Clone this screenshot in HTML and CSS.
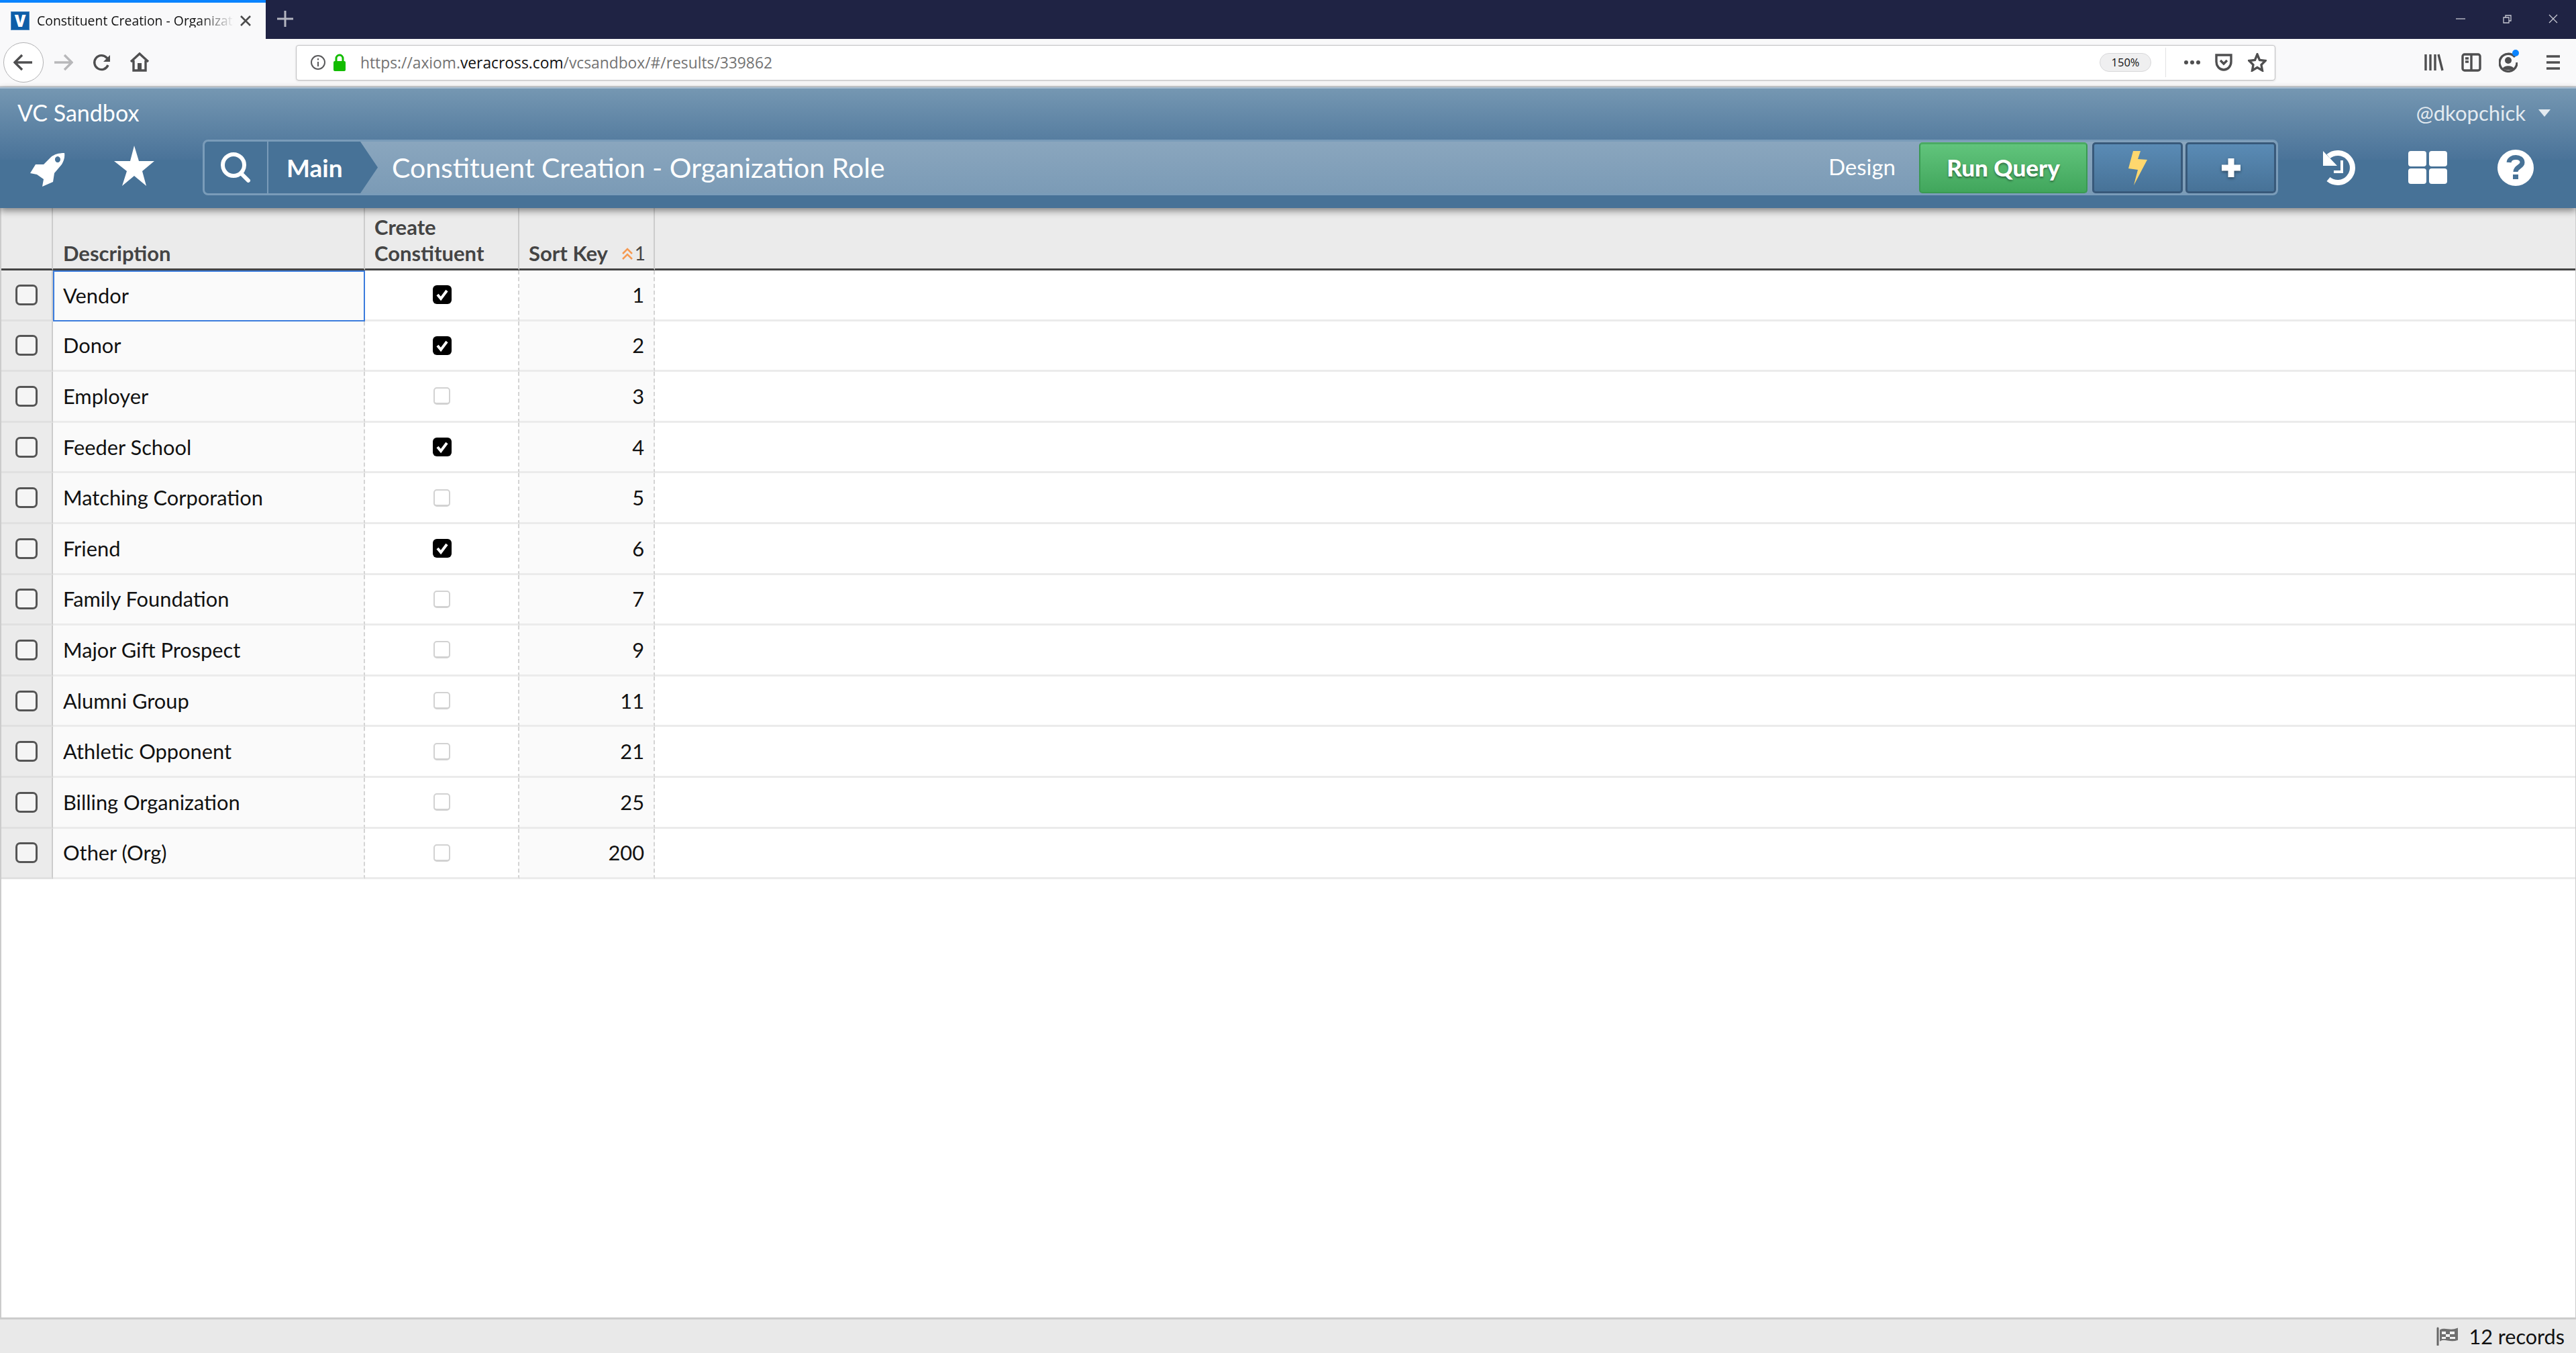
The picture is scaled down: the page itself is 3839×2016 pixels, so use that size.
FILE: index.html
```html
<!DOCTYPE html>
<html lang="en">
<head>
<meta charset="utf-8">
<title>Constituent Creation - Organization Role</title>
<link rel="stylesheet" href="styles.css">
</head>
<body>
<div class="tabstrip">
  <div class="tab">
    <span class="favicon">V</span>
    <span class="tab-title">Constituent Creation - Organization Role</span>
    <svg class="tab-close" viewBox="0 0 18 18"><path d="M2 2L16 16M16 2L2 16"/></svg>
  </div>
  <svg class="newtab" viewBox="0 0 24 24"><path d="M12 0V24M0 12H24"/></svg>
  <div class="winctrls">
    <svg class="winbtn" viewBox="0 0 16 16"><path d="M1 8H15"/></svg>
    <svg class="winbtn" viewBox="0 0 16 16"><path d="M3 6H11V14H3ZM6 6V3H14V11H11"/></svg>
    <svg class="winbtn" viewBox="0 0 16 16"><path d="M2 2L14 14M14 2L2 14"/></svg>
  </div>
</div>
<div class="toolbar">
  <div class="navbtns">
    <span class="backbtn"><svg class="tbicon" viewBox="0 0 30 26"><path d="M28 13H3M13 2L2 13L13 24"/></svg></span>
    <svg class="tbicon forward" viewBox="0 0 30 26"><path d="M2 13H27M17 2L28 13L17 24"/></svg>
    <svg class="tbicon reload" viewBox="0 0 28 28"><path d="M23 18A10.5 10.5 0 1 1 21 7L25 11"/><path class="fillp" d="M26 3V13H16Z"/></svg>
    <svg class="tbicon home" viewBox="0 0 30 30"><path d="M2 14L15 2L28 14M6 12V27H24V12"/><path class="fillp" d="M12 27V16H18V27Z"/></svg>
  </div>
  <div class="urlbar">
    <svg class="urlicon" viewBox="0 0 24 24"><circle cx="12" cy="12" r="10"/><path d="M12 11V18M12 6V8.5"/></svg>
    <svg class="lock" viewBox="0 0 20 26"><path class="lockarc" d="M5 12V7A5 5 0 0 1 15 7V12"/><rect x="1" y="11" width="18" height="15" rx="2"/></svg>
    <span class="url">https://axiom.<b class="urlhost">veracross.com</b>/vcsandbox/#/results/339862</span>
    <span class="zoombadge">150%</span>
    <span class="urlsep"></span>
    <span class="dots"><i></i><i></i><i></i></span>
    <svg class="tbicon pocket" viewBox="0 0 28 28"><path d="M3 3H25V13A11 12 0 0 1 3 13Z"/><path d="M9 11L14 16L19 11"/></svg>
    <svg class="tbicon ustar" viewBox="0 0 28 28"><path d="M14 2L17.5 10.5L26 11.5L20 17.5L21.5 26L14 21.5L6.500 26L8 17.500L2 11.500L10.500 10.500Z"/></svg>
  </div>
  <div class="toolright">
    <svg class="tbicon lib" viewBox="0 0 30 28"><path d="M3 2V26M10 2V26M17 2V26M22 2L28 26"/></svg>
    <svg class="tbicon side" viewBox="0 0 30 28"><rect x="2" y="2" width="26" height="24" rx="3"/><path d="M15 2V26M6 8H11M6 13H11"/></svg>
    <span class="acct">
      <svg class="tbicon acctsvg" viewBox="0 0 28 30"><path d="M24 7A13 13 0 1 0 27 15"/><circle class="fillp" cx="14" cy="12" r="5"/><path class="fillp" d="M6 24C7 19 21 19 22 24C19 27 9 27 6 24Z"/></svg>
      <i class="acctdot"></i>
    </span>
    <span class="toolsep"></span>
    <svg class="tbicon menu" viewBox="0 0 24 24"><path d="M2 3H22M2 12H22M2 21H22"/></svg>
  </div>
</div>
<header class="apphead">
  <div class="headtop">
    <span class="school">VC Sandbox</span>
    <span class="user">@dkopchick<i class="caret"></i></span>
  </div>
  <div class="headnav">
    <svg class="rocket" viewBox="0 0 52 50"><path fill-rule="evenodd" d="M51 0C42 0 36 2 31 6L20 17H8L0 30L10 32L20 39L18 50L34 43L36 30L47 17C50 12 52 6 51 0ZM41 5A4 4.500 0 1 1 40.900 5Z"/></svg>
    <svg class="star" viewBox="0 0 60 60"><path d="M30 0L37 23H60L42 38L48 60L30 45L12 60L19 38L0 23H24Z"/></svg>
    <div class="crumbs">
      <span class="crumb-search"><svg viewBox="0 0 45 45"><circle cx="19" cy="19" r="16"/><path d="M30 31L41 42"/></svg></span>
      <span class="crumb-main">Main</span>
      <span class="crumb-title">Constituent Creation - Organization Role</span>
      <span class="design">Design</span>
      <button class="btn run">Run Query</button>
      <button class="btn tool bolt-btn"><svg viewBox="0 0 28 51"><path d="M7 0H18L14 12L28 13L8 51L14 28L0 26Z"/></svg></button>
      <button class="btn tool plus-btn"><svg viewBox="0 0 34 34"><path d="M17 3V31M3 17H31"/></svg></button>
    </div>
    <svg class="history" viewBox="0 0 54 54"><path class="harc" d="M9 9A22 22 0 1 1 9 43"/><path class="hfill" d="M1 1L1 23L22 23Z"/><path class="hhand" d="M29 15V32H17"/></svg>
    <svg class="apps" viewBox="0 0 58 49"><rect width="27" height="23" rx="4"/><rect x="31" width="27" height="23" rx="4"/><rect y="26" width="27" height="23" rx="4"/><rect x="31" y="26" width="27" height="23" rx="4"/></svg>
    <svg class="help" viewBox="0 0 54 54"><circle cx="27" cy="27" r="27"/><path class="qmark" d="M17 19C18 9 37 9 37 19C37 26 27 25 27 33"/><rect class="qdot" x="23" y="37" width="8" height="7"/></svg>
  </div>
</header>
<main class="grid">
  <div class="row headrow">
    <div class="c c-sel"></div>
    <div class="c c-desc">Description</div>
    <div class="c c-create">Create<br>Constituent</div>
    <div class="c c-sort">Sort Key<span class="sortmark"><svg viewBox="0 0 18 20"><path d="M2 10L9 3L16 10M2 18L9 11L16 18"/></svg>1</span></div>
    <div class="c c-rest"></div>
  </div>
  <div class="row"><div class="c c-sel"><i class="sel"></i></div><div class="c c-desc focus">Vendor</div><div class="c c-create"><svg class="chk on" viewBox="0 0 28 28"><rect width="28" height="28" rx="6"/><path d="M7 14L12 20L21 8"/></svg></div><div class="c c-sort">1</div><div class="c c-rest"></div></div>
  <div class="row"><div class="c c-sel"><i class="sel"></i></div><div class="c c-desc">Donor</div><div class="c c-create"><svg class="chk on" viewBox="0 0 28 28"><rect width="28" height="28" rx="6"/><path d="M7 14L12 20L21 8"/></svg></div><div class="c c-sort">2</div><div class="c c-rest"></div></div>
  <div class="row"><div class="c c-sel"><i class="sel"></i></div><div class="c c-desc">Employer</div><div class="c c-create"><i class="off"></i></div><div class="c c-sort">3</div><div class="c c-rest"></div></div>
  <div class="row"><div class="c c-sel"><i class="sel"></i></div><div class="c c-desc">Feeder School</div><div class="c c-create"><svg class="chk on" viewBox="0 0 28 28"><rect width="28" height="28" rx="6"/><path d="M7 14L12 20L21 8"/></svg></div><div class="c c-sort">4</div><div class="c c-rest"></div></div>
  <div class="row"><div class="c c-sel"><i class="sel"></i></div><div class="c c-desc">Matching Corporation</div><div class="c c-create"><i class="off"></i></div><div class="c c-sort">5</div><div class="c c-rest"></div></div>
  <div class="row"><div class="c c-sel"><i class="sel"></i></div><div class="c c-desc">Friend</div><div class="c c-create"><svg class="chk on" viewBox="0 0 28 28"><rect width="28" height="28" rx="6"/><path d="M7 14L12 20L21 8"/></svg></div><div class="c c-sort">6</div><div class="c c-rest"></div></div>
  <div class="row"><div class="c c-sel"><i class="sel"></i></div><div class="c c-desc">Family Foundation</div><div class="c c-create"><i class="off"></i></div><div class="c c-sort">7</div><div class="c c-rest"></div></div>
  <div class="row"><div class="c c-sel"><i class="sel"></i></div><div class="c c-desc">Major Gift Prospect</div><div class="c c-create"><i class="off"></i></div><div class="c c-sort">9</div><div class="c c-rest"></div></div>
  <div class="row"><div class="c c-sel"><i class="sel"></i></div><div class="c c-desc">Alumni Group</div><div class="c c-create"><i class="off"></i></div><div class="c c-sort">11</div><div class="c c-rest"></div></div>
  <div class="row"><div class="c c-sel"><i class="sel"></i></div><div class="c c-desc">Athletic Opponent</div><div class="c c-create"><i class="off"></i></div><div class="c c-sort">21</div><div class="c c-rest"></div></div>
  <div class="row"><div class="c c-sel"><i class="sel"></i></div><div class="c c-desc">Billing Organization</div><div class="c c-create"><i class="off"></i></div><div class="c c-sort">25</div><div class="c c-rest"></div></div>
  <div class="row"><div class="c c-sel"><i class="sel"></i></div><div class="c c-desc">Other (Org)</div><div class="c c-create"><i class="off"></i></div><div class="c c-sort">200</div><div class="c c-rest"></div></div>
</main>
<footer class="statusbar">
  <svg class="flag" viewBox="0 0 32 28"><path class="pole" d="M2 2V27"/><path class="cloth" d="M6 5C13 1 20 8 31 3V19C20 23 13 16 6 20Z"/><path class="check" d="M8 7H14V11H8ZM14 11H20V15H14ZM20 7H27V11H20ZM8 15H14V18H8ZM20 15H28V18H20Z"/></svg>
  <span>12 records</span>
</footer>
</body>
</html>
```

FILE: styles.css
```css
* { box-sizing: border-box; }
html, body { margin: 0; height: 100%; }
body {
  display: flex;
  flex-direction: column;
  height: 2016px;
  overflow: hidden;
  background: #fff;
  font-family: "Lato", "Liberation Sans", sans-serif;
  color: #111;
}

/* browser tab strip */
.tabstrip {
  flex: 0 0 58px;
  display: flex;
  background: #1f2344;
  position: relative;
}
.tab {
  width: 396px;
  height: 58px;
  background: #f9f9fa;
  border-top: 4px solid #0a84ff;
  display: flex;
  align-items: center;
  padding: 0 21px 0 16px;
}
.favicon {
  flex: 0 0 28px;
  height: 28px;
  background: #0d5ea8;
  border: 1px solid #4a87c0;
  color: #fff;
  font: 800 24px/26px "Open Sans", sans-serif;
  text-align: center;
}
.tab-title {
  flex: 1;
  margin: 0 8px 0 11px;
  overflow: hidden;
  white-space: nowrap;
  font: 19.4px/1 "Open Sans", sans-serif;
  color: #111;
  -webkit-mask-image: linear-gradient(90deg, #000 82%, transparent 100%);
  mask-image: linear-gradient(90deg, #000 82%, transparent 100%);
}
.tab-close { width: 18px; height: 18px; fill: none; stroke: #4c4c4c; stroke-width: 2.6; }
.newtab { width: 24px; height: 24px; margin: 16px 0 0 17px; fill: none; stroke: #b4b5c0; stroke-width: 3; }
.winctrls { margin-left: auto; display: flex; gap: 53px; padding: 20px 26px 0 0; }
.winbtn { width: 16px; height: 16px; fill: none; stroke: #c8c9d2; stroke-width: 1.3; }

/* browser toolbar */
.toolbar {
  flex: 0 0 72px;
  display: flex;
  align-items: center;
  background: #f9f9fa;
  border-bottom: 2px solid #ccd0d4;
  padding-left: 5px;
}
.navbtns { display: flex; align-items: center; width: 436px; }
.backbtn {
  width: 60px;
  height: 60px;
  border: 1px solid #b1b1b3;
  border-radius: 50%;
  background: #fff;
  display: flex;
  align-items: center;
  justify-content: center;
}
.tbicon { fill: none; stroke: #4f4f50; stroke-width: 3.4; flex: none; }
.tbicon .fillp { fill: #4f4f50; stroke: none; }
.backbtn .tbicon { width: 30px; height: 26px; }
.forward { width: 30px; height: 26px; margin-left: 14px; stroke: #b8b8ba; }
.reload { width: 28px; height: 28px; margin-left: 29px; }
.home { width: 30px; height: 30px; margin-left: 27px; }
.urlbar {
  width: 950px;
  flex: 1 1 auto;
  height: 53px;
  background: #fff;
  border: 1px solid #c0c0c2;
  border-radius: 4px;
  display: flex;
  align-items: center;
  padding-left: 20px;
  box-shadow: 0 1px 3px rgba(0, 0, 0, .12);
}
.urlicon { width: 24px; height: 24px; fill: none; stroke: #5a5a5c; stroke-width: 2; }
.lock { width: 20px; height: 26px; margin-left: 10px; fill: #12bc00; }
.lockarc { fill: none; stroke: #12bc00; stroke-width: 3; }
.url { margin: 2px 0 0 21px; font: 22.8px/1 "Open Sans", sans-serif; color: #737373; white-space: nowrap; }
.urlhost { font-weight: 400; color: #111; }
.zoombadge {
  margin-left: auto;
  width: 77px;
  height: 28px;
  border-radius: 14px;
  background: #efeff0;
  border: 1px solid #d8d8da;
  font: 16.5px/26px "Open Sans", sans-serif;
  color: #111;
  text-align: center;
}
.urlsep { width: 1px; height: 44px; margin-left: 21px; background: #e2e2e4; }
.dots { display: flex; gap: 3px; margin-left: 27px; }
.dots i { width: 6px; height: 6px; border-radius: 50%; background: #4f4f50; }
.pocket { width: 28px; height: 28px; margin-left: 21px; }
.ustar { width: 28px; height: 28px; margin: 0 12px 0 22px; }
.toolright { display: flex; align-items: center; margin-left: 221px; width: 227px; height: 60px; padding-right: 22px; }
.lib { width: 30px; height: 28px; }
.side { width: 30px; height: 28px; margin-left: 26px; }
.acct { position: relative; display: flex; margin-left: 26px; }
.acctsvg { width: 28px; height: 30px; }
.acctdot { position: absolute; right: -2px; top: -4px; width: 10px; height: 10px; border-radius: 50%; background: #0a84ff; }
.toolsep { width: 1px; height: 60px; margin-left: 20px; background: #e2e2e4; }
.menu { width: 24px; height: 24px; margin-left: 21px; stroke-width: 3.6; }

/* app header */
.apphead {
  flex: 0 0 180px;
  background: linear-gradient(#7597b2 0, #4a7399 106px, #477297 106px);
  border-top: 2px solid #a3bbd0;
  box-shadow: 0 4px 10px rgba(0, 0, 0, .45);
  position: relative;
  z-index: 2;
  color: #fff;
}
.headtop { height: 76px; display: flex; justify-content: space-between; padding: 16px 38px 0 26px; font-size: 34px; line-height: 40px; }
.school { color: #fff; }
.user { color: #e3eaf0; display: flex; align-items: center; height: 40px; font-size: 31px; }
.caret { margin-left: 19px; border: 9px solid transparent; border-top: 11px solid #e3eaf0; border-bottom: 0; }
.headnav { display: flex; align-items: center; height: 83px; padding-left: 45px; }
.rocket { width: 52px; height: 50px; fill: #fff; margin-top: 6px; }
.star { width: 60px; height: 60px; fill: #fff; margin: -5px 0 0 73px; }
.crumbs {
  width: 3093px;
  height: 83px;
  margin-left: 72px;
  display: flex;
  align-items: center;
  border: 3px solid #7a9cb9;
  border-radius: 8px;
  background: linear-gradient(#8aa6be, #7b9bb6);
  overflow: hidden;
  flex: none;
}
.crumb-search {
  width: 95px;
  height: 100%;
  background: #477297;
  border-right: 2px solid #7a9cb9;
  display: flex;
  align-items: center;
  justify-content: center;
}
.crumb-search svg { width: 45px; height: 45px; fill: none; stroke: #fff; stroke-width: 6; stroke-linecap: round; }
.crumb-main {
  width: 163px;
  height: 100%;
  padding-left: 27px;
  background: #477297;
  clip-path: polygon(0 0, 137px 0, 100% 50%, 137px 100%, 0 100%);
  font-size: 37px;
  font-weight: 700;
  line-height: 77px;
}
.crumb-title { margin-left: 21px; font-size: 41px; white-space: nowrap; }
.design { margin: 0 0 3px auto; font-size: 33px; }
.btn { padding: 0; height: 76px; border-radius: 5px; cursor: default; font-family: inherit; }
.run {
  width: 251px;
  margin-left: 35px;
  padding-bottom: 3px;
  background: linear-gradient(#61c47c, #41a65c);
  border: 2px solid #3a9a52;
  border-top: 3px solid #4aab63;
  color: #fff;
  font-size: 35px;
  font-weight: 900;
  text-shadow: 0 2px 3px rgba(0, 0, 0, .4);
}
.tool {
  margin-left: 7px;
  background: linear-gradient(#5a8bb5, #477297);
  border: 3px solid #38597a;
  display: flex;
  align-items: center;
  justify-content: center;
}
.bolt-btn { width: 135px; }
.plus-btn { width: 135px; margin-left: 4px; }
.bolt-btn svg { width: 28px; height: 51px; margin-top: 2px; fill: #ffd76e; }
.plus-btn svg { width: 34px; height: 34px; fill: none; stroke: #fff; stroke-width: 9; filter: drop-shadow(0 2px 2px rgba(0, 0, 0, .4)); }
.history { width: 54px; height: 54px; margin: 2px 0 0 66px; }
.harc { fill: none; stroke: #fff; stroke-width: 8; }
.hfill { fill: #fff; }
.hhand { fill: none; stroke: #fff; stroke-width: 4; }
.apps { width: 58px; height: 49px; margin-left: 74px; fill: #fff; }
.help { width: 54px; height: 54px; margin-left: 75px; }
.help circle { fill: #fff; }
.qmark { fill: none; stroke: #477297; stroke-width: 7; }
.qdot { fill: #477297; }

/* data grid */
.grid { flex: 1 1 auto; border-left: 2px solid #ccc; border-right: 1px solid #ccc; overflow: hidden; }
.row {
  display: grid;
  grid-template-columns: 77px 465px 230px 202px 1fr;
  height: 75.6px;
  font-size: 30.8px;
}
.c { min-width: 0; display: flex; align-items: center; border-bottom: 3px solid #ebebeb; border-right: 2px dashed #d4d4d4; background: #fff; }
.c-sel { background: #ebebeb; justify-content: center; border-right: 2px solid #ccc; border-bottom-color: #e0e0e0; }
.c-desc { padding-left: 15px; background: #fafafa; }
.c-create { justify-content: center; }
.c-sort { justify-content: flex-end; padding-right: 14px; background: #fafafa; }
.c-rest { border-right: 0; }
.focus { padding-left: 13px; border: 2px solid #3a7bdc; }
.sel { width: 33px; height: 31px; border: 3px solid #555; border-radius: 7px; background: #f5f5f5; }
.chk { width: 28px; height: 28px; margin-left: 1px; }
.chk rect { fill: #000; }
.chk path { fill: none; stroke: #fff; stroke-width: 4; }
.off { width: 25px; height: 26px; border: 2px solid #d2d2d2; border-bottom-width: 3px; border-radius: 5px; background: #fff; }

.headrow { height: 93px; color: #444; font-weight: 700; font-size: 31px; line-height: 39px; }
.headrow .c {
  background: #ebebeb;
  border-bottom: 3px solid #444;
  border-right: 2px solid #ccc;
  align-items: flex-end;
  padding-bottom: 3px;
}
.headrow .c-desc { padding-left: 15px; }
.headrow .c-create { justify-content: flex-start; padding-left: 14px; }
.headrow .c-sort { justify-content: space-between; padding: 0 12px 3px 14px; }
.headrow .c-rest { border-right: 0; }
.sortmark { display: flex; align-items: center; height: 39px; font-weight: 400; font-size: 28px; }
.sortmark svg { width: 18px; height: 20px; margin-right: 2px; fill: none; stroke: #f59a52; stroke-width: 2.500; }

/* status bar */
.statusbar {
  flex: 0 0 53px;
  display: flex;
  align-items: center;
  justify-content: flex-end;
  gap: 16px;
  padding-right: 17px;
  background: #e9e9e9;
  border-top: 3px solid #ccc;
  font-size: 30.6px;
  color: #111;
}
.flag { width: 32px; height: 28px; }
.pole { fill: none; stroke: #666; stroke-width: 3; stroke-linecap: round; }
.cloth { fill: #6f6f6f; stroke: #6f6f6f; stroke-width: 2; }
.check { fill: #f2f2f2; }
```
